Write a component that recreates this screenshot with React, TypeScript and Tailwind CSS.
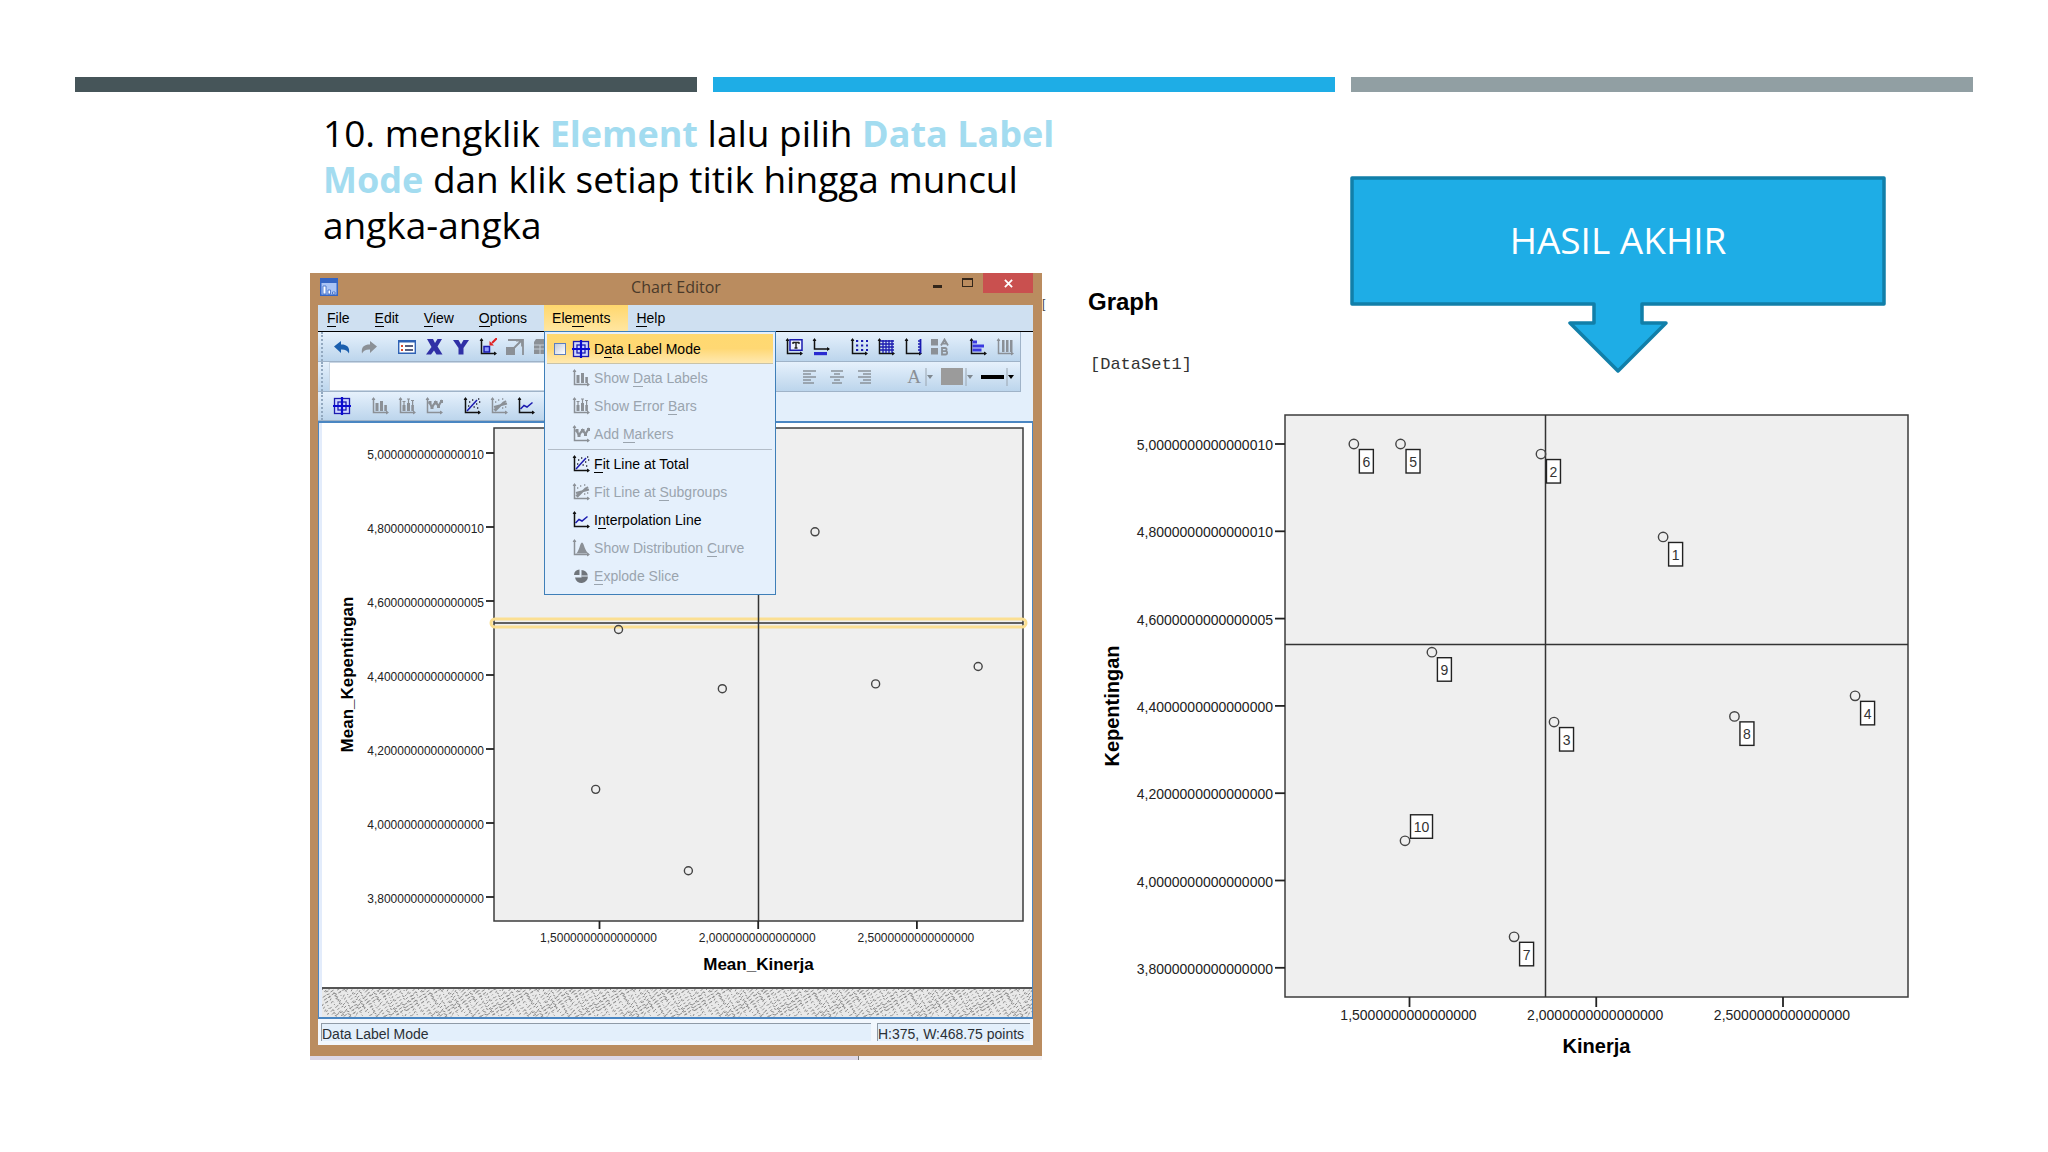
import type { ReactNode } from "react";

type Point = { id: number; x: number; y: number; above?: boolean };

const points: Point[] = [
  { id: 1, x: 2.179, y: 4.787 },
  { id: 2, x: 1.852, y: 4.977 },
  { id: 3, x: 1.887, y: 4.363 },
  { id: 4, x: 2.693, y: 4.423 },
  { id: 5, x: 1.476, y: 5 },
  { id: 6, x: 1.351, y: 5 },
  { id: 7, x: 1.78, y: 3.871 },
  { id: 8, x: 2.37, y: 4.376 },
  { id: 9, x: 1.56, y: 4.523 },
  { id: 10, x: 1.488, y: 4.091, above: true },
];

const yTicks = [
  { value: 5, label: "5,0000000000000010" },
  { value: 4.8, label: "4,8000000000000010" },
  { value: 4.6, label: "4,6000000000000005" },
  { value: 4.4, label: "4,4000000000000000" },
  { value: 4.2, label: "4,2000000000000000" },
  { value: 4, label: "4,0000000000000000" },
  { value: 3.8, label: "3,8000000000000000" },
];

const xTicks = [
  { value: 1.5, label: "1,5000000000000000" },
  { value: 2, label: "2,0000000000000000" },
  { value: 2.5, label: "2,5000000000000000" },
];

type ChartProps = {
  width: number;
  height: number;
  frame: { x: number; y: number; w: number; h: number };
  originX: number; // pixel of x = 1.5
  originY: number; // pixel of y = 5
  unitX: number;
  unitY: number;
  refX: number;
  refY: number;
  radius: number;
  tick: number;
  tickClass: string;
  titleClass: string;
  xTitle: string;
  yTitle: string;
  yTitleX: number;
  xLabelY: number;
  xTitleY: number;
  showLabels?: boolean;
  selectedLine?: boolean;
};

const ScatterChart = (p: ChartProps) => {
  const { frame } = p;
  const px = (v: number) => p.originX + (v - 1.5) * p.unitX;
  const py = (v: number) => p.originY + (5 - v) * p.unitY;
  const right = frame.x + frame.w;
  const bottom = frame.y + frame.h;
  const midY = frame.y + frame.h / 2;

  return (
    <svg viewBox={`0 0 ${p.width} ${p.height}`} className="block w-full" role="img" aria-label={`${p.yTitle} / ${p.xTitle}`}>
      <rect x={frame.x} y={frame.y} width={frame.w} height={frame.h} fill="#efefef" stroke="#3c3c3c" strokeWidth="1.5" />

      {p.selectedLine && (
        <rect x={frame.x - 3} y={p.refY - 4} width={frame.w + 6} height="8" rx="4" fill="none" stroke="#fbdf92" strokeWidth="3" />
      )}
      <path d={`M${frame.x} ${p.refY}H${right}M${p.refX} ${frame.y}V${bottom}`} stroke="#333" strokeWidth="1.5" fill="none" />

      {yTicks.map((t) => (
        <g key={t.label}>
          <path d={`M${frame.x - p.tick} ${py(t.value)}h${p.tick}`} stroke="#222" strokeWidth="1.8" />
          <text x={frame.x - p.tick - 2} y={py(t.value) + 6} textAnchor="end" className={p.tickClass}>{t.label}</text>
        </g>
      ))}
      {xTicks.map((t) => (
        <g key={t.label}>
          <path d={`M${px(t.value)} ${bottom}v${p.tick}`} stroke="#222" strokeWidth="1.8" />
          <text x={px(t.value) - 1} y={p.xLabelY} textAnchor="middle" className={p.tickClass}>{t.label}</text>
        </g>
      ))}

      {points.map((pt) => (
        <g key={pt.id}>
          <circle cx={px(pt.x)} cy={py(pt.y)} r={p.radius} fill="none" stroke="#444" strokeWidth="1.4" />
          {p.showLabels && (
            <>
              <rect
                x={px(pt.x) + 5.5}
                y={py(pt.y) + (pt.above ? -26 : 5.5)}
                width={pt.id > 9 ? 22 : 14}
                height="23.5"
                fill="#fff"
                stroke="#222"
                strokeWidth="1.4"
              />
              <text
                x={px(pt.x) + (pt.id > 9 ? 16.5 : 12.5)}
                y={py(pt.y) + (pt.above ? -9 : 23)}
                textAnchor="middle"
                className="fill-[#333] text-[14px]"
              >
                {pt.id}
              </text>
            </>
          )}
        </g>
      ))}

      <text x={frame.x + frame.w / 2} y={p.xTitleY} textAnchor="middle" className={p.titleClass}>{p.xTitle}</text>
      <text transform={`translate(${p.yTitleX} ${midY}) rotate(-90)`} textAnchor="middle" className={p.titleClass}>{p.yTitle}</text>
    </svg>
  );
};

/* ---------- toolbar icons ---------- */

const BLUE = "#1b1bb0";
const GRAY = "#8b9096";

const Icon = ({ children }: { children: ReactNode }) => (
  <svg viewBox="0 0 18 18" className="block size-[18px]" fill="none" aria-hidden="true">{children}</svg>
);

const Axes = ({ color = "#111" }: { color?: string }) => (
  <>
    <path d="M2.5 1v14.5H17" stroke={color} strokeWidth="1.5" />
    <path d="M0.6 3 2.5 0l1.9 3zM15 13.6l3 1.9-3 1.9z" fill={color} />
  </>
);

const LabelModeIcon = () => (
  <Icon>
    <rect x="1.5" y="1.5" width="15" height="15" stroke={BLUE} fill="#cfd6ff" strokeWidth="1.3" />
    <rect x="5" y="5" width="8" height="8" stroke={BLUE} strokeWidth="1.3" />
    <path d="M9 0v18M0 9h18" stroke="#0b0bd0" strokeWidth="2.2" />
  </Icon>
);
const BarsIcon = () => (
  <Icon><Axes color={GRAY} /><path d="M4.5 6h3v8h-3zM9 4h3v10H9zM13.3 8h2.6v6h-2.6z" fill={GRAY} /></Icon>
);
const ErrorBarsIcon = () => (
  <Icon>
    <Axes color={GRAY} />
    <path d="M4.5 8h3v6h-3zM9 6h3v8H9zM13.3 8h2.6v6h-2.6z" fill={GRAY} />
    <path d="M6 4v5M4.5 4.5h3M10.5 1.5v6M9 2h3M14.6 3v6M13 3.5h3" stroke={GRAY} strokeWidth="1.2" />
  </Icon>
);
const MarkersIcon = () => (
  <Icon>
    <Axes color={GRAY} />
    <path d="m4 5 3 5 3.5-5 3 4 3.5-6" stroke={GRAY} strokeWidth="2.2" />
    <path d="M3.5 4h3v3h-3zM5.5 9h3v3h-3zM9 4h3.5v3.5H9zM12 8h3v3h-3zM15 3h3v3h-3z" fill={GRAY} />
  </Icon>
);
const FitTotalIcon = () => (
  <Icon>
    <Axes />
    <path d="m4 14 10-11" stroke={BLUE} strokeWidth="1.5" />
    <path d="M6 5h1.3M9 3h1.3M15 2h1.3M13 7h1.3M10.5 10h1.3M14 11h1.3M5 9h1.3M16 5h1.3" stroke="#223" strokeWidth="1.3" />
  </Icon>
);
const FitSubgroupsIcon = () => (
  <Icon>
    <Axes color={GRAY} />
    <path d="M4 13 16 4M4 10l13-3.5M5 14l9-9" stroke={GRAY} strokeWidth="1.9" />
    <path d="M5 5h1.3M8 3h1.3M12 2h1.3M12 11h1.3M15 10h1.3" stroke={GRAY} strokeWidth="1.3" />
  </Icon>
);
const InterpolationIcon = () => (
  <Icon><Axes /><path d="m3.5 12 3.5-3.5 3 1.5 5.5-4.5" stroke={BLUE} strokeWidth="1.5" /></Icon>
);
const DistributionIcon = () => (
  <Icon><Axes color={GRAY} /><path d="M4 14.5c3-1 4-11 6-11s3 10 7 11z" fill={GRAY} /></Icon>
);
const SliceIcon = () => (
  <Icon>
    <path d="M9.5 3a6.5 6.5 0 1 1-6.5 7.5h6.5z" fill="#70757b" />
    <path d="M7.5 2.5V8H2A5.5 5.5 0 0 1 7.5 2.5z" fill="#70757b" />
    <path d="M9.5 9h7" stroke="#e6f1fc" />
  </Icon>
);
const UndoIcon = () => (
  <Icon><path d="M1 8.5 8 3v3.5c6 0 9 2.5 8 9-1.5-3-4-4.2-8-4V15z" fill="#1b5fae" /></Icon>
);
const RedoIcon = () => (
  <Icon><path d="M17 8.5 10 3v3.5c-6 0-9 2.5-8 9 1.5-3 4-4.2 8-4V15z" fill={GRAY} /></Icon>
);
const PropertiesIcon = () => (
  <Icon>
    <path d="M0.7 2.7h16.6v12.6H.7z" fill="#fff" stroke="#2f62b5" strokeWidth="1.4" />
    <path d="M1 3.5h16" stroke="#2f62b5" strokeWidth="2" />
    <path d="M3 8h2M3 12h2" stroke="#d8482b" strokeWidth="2" />
    <path d="M7 8h8M7 12h8" stroke="#222b55" strokeWidth="1.5" />
  </Icon>
);
const XIcon = () => (
  <Icon><path d="M2 1h6l2 4L12.5 1H17l-4.5 7.5 5 8h-6l-2.500-4-3 4H1l5.500-7.500z" fill="#3030a6" /></Icon>
);
const YIcon = () => (
  <Icon><path d="M1 2h5.5L9 6.5 11.5 2H17l-5.500 8v6.500h-5V10z" fill="#3030a6" /></Icon>
);
const ScaleIcon = () => (
  <Icon>
    <Axes />
    <path d="M5 8.5h5.5V14H5z" fill="#8f9bff" stroke={BLUE} strokeWidth="1.5" />
    <path d="m18 0-5 5" stroke="#e02020" strokeWidth="2" />
    <path d="M10.5 7.5V3l4.5 4.5z" fill="#e02020" />
  </Icon>
);
const RescaleIcon = () => (
  <Icon>
    <path d="M0 9h9v8H0z" fill={GRAY} />
    <path d="M2 2h15v15M7 11l9-9M10 2.5h6v6" stroke={GRAY} strokeWidth="1.8" />
  </Icon>
);
const TableIcon = () => (
  <Icon>
    <path d="M1 4 3 1h14v15H1z" fill={GRAY} />
    <path d="M1 7h16M1 11h16M7 7v9M12 7v9" stroke="#c3ccd5" />
  </Icon>
);
const TextBoxIcon = () => (
  <Icon>
    <Axes />
    <path d="M5 1.8h12v10.5H5z" fill="#eef3ff" stroke={BLUE} strokeWidth="1.5" />
    <path d="M8 4.5h6M11 4.5V10M9.5 10h3M8 4v2M14 4v2" stroke="#222" strokeWidth="1.4" />
  </Icon>
);
const FootnoteIcon = () => (
  <Icon>
    <path d="M2.5 1v10H17" stroke="#111" strokeWidth="1.5" />
    <path d="M.6 3 2.5 0l1.9 3zM15 9l3 2-3 2z" fill="#111" />
    <path d="M2 14h13v3.2H2z" fill="#2a2ad0" />
  </Icon>
);
const DotsIcon = () => (
  <Icon>
    <Axes />
    <path d="M6 3h12M6 7.5h12M6 12h12" stroke={BLUE} strokeWidth="2.2" strokeDasharray="2.2 2.8" />
  </Icon>
);
const GridIcon = () => (
  <Icon>
    <Axes />
    <path d="M3 3h14M3 6h14M3 9h14M3 12h14M6 2v13M9 2v13M12 2v13M15 2v13" stroke={BLUE} strokeWidth="1.3" />
  </Icon>
);
const SecondAxisIcon = () => (
  <Icon>
    <Axes />
    <path d="M16.5 1v14.5" stroke={BLUE} strokeWidth="1.8" />
    <path d="M14 3h2.5M14 6h2.5M14 9h2.5M14 12h2.5" stroke={BLUE} strokeWidth="1.5" />
  </Icon>
);
const CategoriesIcon = () => (
  <Icon>
    <path d="M0 1h7v6.5H0zM0 10h7v6.5H0z" fill={GRAY} />
    <path d="m10 7.5 3.5-6 3.5 6M11 5.5h5M11 10v6.5h3.5a1.6 1.6 0 0 0 0-3.3H11h3a1.5 1.5 0 0 0 0-3.2z" stroke={GRAY} strokeWidth="1.8" />
  </Icon>
);
const HBarsIcon = () => (
  <Icon><Axes /><path d="M3.5 2.5H8v3H3.5zM3.5 6.5H15v3H3.5zM3.5 10.5h9v3h-9z" fill="#3a3ae0" /></Icon>
);
const VBarsIcon = () => (
  <Icon><Axes color={GRAY} /><path d="M6 2h2.5v12H6zM10 2h2.5v12H10zM14 2h2.5v12H14z" fill={GRAY} /></Icon>
);
const AlignIcon = ({ d }: { d: string }) => (
  <Icon><path d={d} stroke="#8a929b" strokeWidth="1.4" /></Icon>
);
const Caret = ({ className }: { className: string }) => (
  <svg viewBox="0 0 8 18" className={`block h-[18px] w-2 ${className}`} aria-hidden="true">
    <path d="M1 0v18" stroke="#9aa5b0" />
    <path d="M2 7h6l-3 4z" fill="currentColor" />
  </svg>
);

const Grip = () => <span className="h-full w-1 border-l-2 border-dotted border-[#93a9c0]" />;

const ToolButton = ({ label, children }: { label: string; children: ReactNode }) => (
  <button type="button" aria-label={label} className="shrink-0">{children}</button>
);

const barClass = "flex items-center border-b border-[#9fb3c8] bg-linear-to-b from-[#e6f1fc] to-[#bcd5ec]";

const Toolbars = () => (
  <div className="bg-[#e3effb] pr-3">
    <div className={`${barClass} h-[30px] border-r pr-1.5 pl-[3px]`}>
      <Grip />
      <div className="ml-2 flex gap-[9px]">
        <ToolButton label="Undo"><UndoIcon /></ToolButton>
        <ToolButton label="Redo"><RedoIcon /></ToolButton>
      </div>
      <div className="ml-5 flex gap-[9px]">
        <ToolButton label="Properties"><PropertiesIcon /></ToolButton>
        <ToolButton label="X axis"><XIcon /></ToolButton>
        <ToolButton label="Y axis"><YIcon /></ToolButton>
        <ToolButton label="Scale"><ScaleIcon /></ToolButton>
        <ToolButton label="Rescale"><RescaleIcon /></ToolButton>
        <ToolButton label="Table"><TableIcon /></ToolButton>
      </div>
      <div className="ml-auto flex gap-[9px]">
        <ToolButton label="Text box"><TextBoxIcon /></ToolButton>
        <ToolButton label="Footnote"><FootnoteIcon /></ToolButton>
      </div>
      <div className="ml-5 flex gap-[9px]">
        <ToolButton label="Minor grid"><DotsIcon /></ToolButton>
        <ToolButton label="Grid lines"><GridIcon /></ToolButton>
        <ToolButton label="Derived axis"><SecondAxisIcon /></ToolButton>
        <ToolButton label="Categories"><CategoriesIcon /></ToolButton>
      </div>
      <div className="ml-5 flex gap-[9px]">
        <ToolButton label="Transpose"><HBarsIcon /></ToolButton>
        <ToolButton label="Columns"><VBarsIcon /></ToolButton>
      </div>
    </div>

    <div className={`${barClass} h-[30px] border-r pr-1.5 pl-[3px]`}>
      <Grip />
      <input aria-label="Font" className="ml-1 h-full w-[300px] border border-[#c9d6e4] bg-white px-1 outline-none" />
      <div className="ml-auto flex gap-[9px]">
        <ToolButton label="Align left"><AlignIcon d="M2 3h13M2 6h8M2 9h13M2 12h8M2 15h11" /></ToolButton>
        <ToolButton label="Align center"><AlignIcon d="M3 3h12M6 6h6M2 9h14M6 12h6M4 15h10" /></ToolButton>
        <ToolButton label="Align right"><AlignIcon d="M3 3h13M8 6h8M3 9h13M8 12h8M5 15h11" /></ToolButton>
      </div>
      <div className="ml-[34px] flex items-center gap-1">
        <button type="button" className="flex items-center gap-1 font-['Liberation_Serif',serif] text-[19px] leading-5 text-[#8b9096]">
          A<Caret className="text-[#7f8890]" />
        </button>
        <button type="button" aria-label="Fill color" className="ml-1 flex items-center gap-0.5">
          <span className="h-[17px] w-[22px] bg-[#9b9b9b]" />
          <Caret className="text-[#7f8890]" />
        </button>
        <button type="button" aria-label="Line style" className="ml-1 flex items-center gap-0.5">
          <span className="h-1 w-[23px] bg-black" />
          <Caret className="text-black" />
        </button>
      </div>
    </div>

    <div className={`${barClass} h-[29px] w-[300px] pl-[3px]`}>
      <Grip />
      <div className="ml-2 flex">
        <ToolButton label="Data label mode"><LabelModeIcon /></ToolButton>
      </div>
      <div className="ml-5 flex gap-[9px]">
        <ToolButton label="Data labels"><BarsIcon /></ToolButton>
        <ToolButton label="Error bars"><ErrorBarsIcon /></ToolButton>
        <ToolButton label="Markers"><MarkersIcon /></ToolButton>
      </div>
      <div className="ml-5 flex gap-[9px]">
        <ToolButton label="Fit line"><FitTotalIcon /></ToolButton>
        <ToolButton label="Fit subgroups"><FitSubgroupsIcon /></ToolButton>
        <ToolButton label="Interpolation"><InterpolationIcon /></ToolButton>
      </div>
    </div>
  </div>
);

/* ---------- menus ---------- */

// "_" stands before the mnemonic letter
const Mnemonic = ({ text }: { text: string }) => {
  const [before, after] = text.split("_");
  return (
    <span>
      {before}
      <span className="border-b border-current">{after[0]}</span>
      {after.slice(1)}
    </span>
  );
};

const MenuItem = ({ text, icon, enabled }: { text: string; icon: ReactNode; enabled?: boolean }) => (
  <li>
    <button type="button" disabled={!enabled} className="flex h-7 w-full items-center gap-1 pl-[26px] text-black disabled:text-[#9aa4ae]">
      {icon}
      <Mnemonic text={text} />
    </button>
  </li>
);

const ElementsMenu = () => (
  <ul className="absolute top-full left-0 z-10 w-[232px] border border-[#3f7fb8] bg-[#e5f0fc] px-px pt-0.5 pb-1 whitespace-nowrap">
    <li className="mx-px flex h-[30px] items-center border-b border-[#c9c3a8] bg-linear-to-b from-[#ffd970] via-[#ffd873] to-[#ffe9b0] pl-[7px]">
      <label className="flex items-center gap-1">
        <input type="checkbox" className="mr-0.5 size-3 appearance-none border border-[#5d7fc0] bg-linear-to-br from-[#c5ccda] to-white" />
        <LabelModeIcon />
        <Mnemonic text="D_ata Label Mode" />
      </label>
    </li>
    <MenuItem text="Show _Data Labels" icon={<BarsIcon />} />
    <MenuItem text="Show Error _Bars" icon={<ErrorBarsIcon />} />
    <MenuItem text="Add _Markers" icon={<MarkersIcon />} />
    <li className="mx-0.5 mt-px h-px bg-[#b3bdc8]" />
    <MenuItem text="_Fit Line at Total" icon={<FitTotalIcon />} enabled />
    <MenuItem text="Fit Line at _Subgroups" icon={<FitSubgroupsIcon />} />
    <MenuItem text="I_nterpolation Line" icon={<InterpolationIcon />} enabled />
    <MenuItem text="Show Distribution _Curve" icon={<DistributionIcon />} />
    <MenuItem text="_Explode Slice" icon={<SliceIcon />} />
  </ul>
);

const MenuBar = () => (
  <nav className="flex h-[27px] border-b border-black bg-[#cfe0f1] pl-px">
    {["_File", "_Edit", "_View", "_Options"].map((text) => (
      <button key={text} type="button" className="pr-[17px] pl-2"><Mnemonic text={text} /></button>
    ))}
    <div className="relative flex">
      <button type="button" className="bg-linear-to-b from-[#ffd76c] to-[#ffe6a0] pr-[18px] pl-2">
        <Mnemonic text="Ele_ments" />
      </button>
      <ElementsMenu />
    </div>
    <button type="button" className="pr-[17px] pl-2"><Mnemonic text="_Help" /></button>
  </nav>
);

/* ---------- chart editor window ---------- */

const TitleBar = () => (
  <div className="grid h-8 grid-cols-3 bg-[#ba8c5f]">
    <div className="flex items-center pb-1 pl-[10px]">
      <svg viewBox="0 0 18 18" className="size-[18px]" aria-hidden="true">
        <rect width="18" height="18" fill="#3565c4" />
        <rect x="1.5" y="5" width="15" height="11.5" fill="#a9c3f5" />
        <path d="M3 8h3v8H3zM8 12h2.5v4H8zM12.5 14H15v2h-2.5z" fill="#fff" stroke="#3565c4" strokeWidth=".8" />
      </svg>
    </div>
    <h2 className="text-center font-['Open_Sans',sans-serif] text-base leading-[29px] text-[#4a3a2a]">Chart Editor</h2>
    <div className="flex h-5 items-center justify-end pr-[9px]">
      <button type="button" aria-label="Minimize" className="mt-1.5 mr-5 h-[3px] w-[9px] bg-[#33261a]" />
      <button type="button" aria-label="Maximize" className="mr-[10px] mb-0.5 h-[9px] w-[11px] border border-t-2 border-[#33261a]" />
      <button type="button" aria-label="Close" className="flex h-5 w-[50px] items-center justify-center bg-[#c9504f]">
        <svg viewBox="0 0 10 10" className="size-[9px]" aria-hidden="true">
          <path d="m1 1 8 8M9 1 1 9" stroke="#fff" strokeWidth="2" />
        </svg>
      </button>
    </div>
  </div>
);

const speckles = Array.from({ length: 260 }, (_, i) => {
  const x = (i * 37.7) % 96;
  const y = (i * 11.3 + (i % 7) * 3.1) % 28;
  const dx = 1 + (i % 3);
  const dy = i % 4 === 0 ? 1 : -1 - (i % 2);
  return `M${x.toFixed(1)} ${y.toFixed(1)}l${dx} ${dy}`;
}).join("");

const Canvas = () => (
  <div className="border-x border-y-2 border-[#4a86c2] bg-white">
    <div className="border-l-3 border-[#e3ecfb]">
      <ScatterChart
        width={710}
        height={564}
        frame={{ x: 172, y: 5, w: 529, h: 493 }}
        originX={277.5}
        originY={30}
        unitX={317.4}
        unitY={370}
        refX={436.5}
        refY={200}
        radius={4}
        tick={8}
        tickClass="fill-[#222] text-[12px]"
        titleClass="fill-black text-[17px] font-bold"
        xTitle="Mean_Kinerja"
        yTitle="Mean_Kepentingan"
        yTitleX={31}
        xLabelY={519}
        xTitleY={547}
        selectedLine
      />
      <svg className="block h-[30px] w-full border-t-2 border-[#555]" aria-hidden="true">
        <defs>
          <pattern id="stone" width="96" height="28" patternUnits="userSpaceOnUse">
            <rect width="96" height="28" fill="#e9e9e9" />
            <path d={speckles} stroke="#8c8c8c" strokeWidth="1" />
          </pattern>
        </defs>
        <rect width="100%" height="100%" fill="url(#stone)" />
      </svg>
    </div>
  </div>
);

const StatusBar = () => (
  <div className="flex h-[26px] gap-1.5 bg-[#f2f7fd] px-[3px] py-1 leading-5 text-[#2a2f36]">
    <span className="flex-1 border-t border-l border-[#8f9aa6] bg-[#e3effb]">Data Label Mode</span>
    <span className="w-[153px] border-t border-l border-[#8f9aa6] bg-[#e3effb] whitespace-nowrap">H:375, W:468.75 points</span>
  </div>
);

const ChartEditor = () => (
  <section className="relative text-sm">
    <TitleBar />
    <div className="border-r-9 border-b-11 border-l-8 border-[#ba8c5f]">
      <MenuBar />
      <Toolbars />
      <Canvas />
      <StatusBar />
    </div>
    {/* sliver of the output viewer behind the window */}
    <div className="flex h-1 bg-[#f3f1f4]">
      <span className="w-3/4 border-r border-[#777] bg-[#ddd8e8]" />
    </div>
    <span className="absolute top-[22px] -right-1 w-1 overflow-hidden text-xs leading-[18px] text-[#444]">[</span>
  </section>
);

const Callout = () => (
  <svg viewBox="0 0 536 198" className="w-[536px] shrink-0" role="img" aria-label="HASIL AKHIR">
    <path
      d="M2 2h532v126H292v19h24l-48 48-48-48h24v-19H2z"
      fill="#1eade6"
      stroke="#117fa9"
      strokeWidth="3.5"
      strokeLinejoin="round"
    />
    <text x="268" y="78" textAnchor="middle" className="fill-white font-['Open_Sans',sans-serif] text-[37px]">HASIL AKHIR</text>
  </svg>
);

const Term = ({ children }: { children: ReactNode }) => (
  <strong className="text-[36px] leading-none text-[#a3dcf0]">{children}</strong>
);

export default function App() {
  return (
    <main className="min-h-screen bg-white px-[75px] pt-[77px] font-['Liberation_Sans',Arial,sans-serif] text-black">
      <div className="grid grid-cols-3 gap-4">
        <span className="h-[15px] bg-[#465559]" />
        <span className="h-[15px] bg-[#1eade6]" />
        <span className="h-[15px] bg-[#919fa3]" />
      </div>

      <div className="grid grid-cols-[985fr_913fr]">
        <div className="pt-[18px] pl-[235px]">
          <h1 className="mb-[25px] pl-[13px] font-['Open_Sans',sans-serif] text-[37px] leading-[46px] whitespace-nowrap">
            10. mengklik <Term>Element</Term> lalu pilih <Term>Data Label</Term>
            <br />
            <Term>Mode</Term> dan klik setiap titik hingga muncul
            <br />
            angka-angka
          </h1>
          <div className="pr-[18px]">
            <ChartEditor />
          </div>
        </div>

        <div className="pt-[83px] pr-[63px] pl-7">
          <div className="flex justify-between pr-6">
            <div>
              <h2 className="mt-[113px] text-2xl leading-7 font-bold">Graph</h2>
              <p className="mt-[39px] ml-[2px] font-['Liberation_Mono',monospace] text-[17px] leading-5 text-[#333]">[DataSet1]</p>
            </div>
            <Callout />
          </div>
          <div className="mt-[25px]">
            <ScatterChart
              width={822}
              height={670}
              frame={{ x: 197, y: 15, w: 623, h: 582 }}
              originX={321.5}
              originY={44}
              unitX={373.5}
              unitY={436.5}
              refX={457.5}
              refY={244.5}
              radius={4.7}
              tick={10}
              tickClass="fill-[#222] text-[14px]"
              titleClass="fill-black text-[20px] font-bold"
              xTitle="Kinerja"
              yTitle="Kepentingan"
              yTitleX={31}
              xLabelY={620}
              xTitleY={653}
              showLabels
            />
          </div>
        </div>
      </div>
    </main>
  );
}
